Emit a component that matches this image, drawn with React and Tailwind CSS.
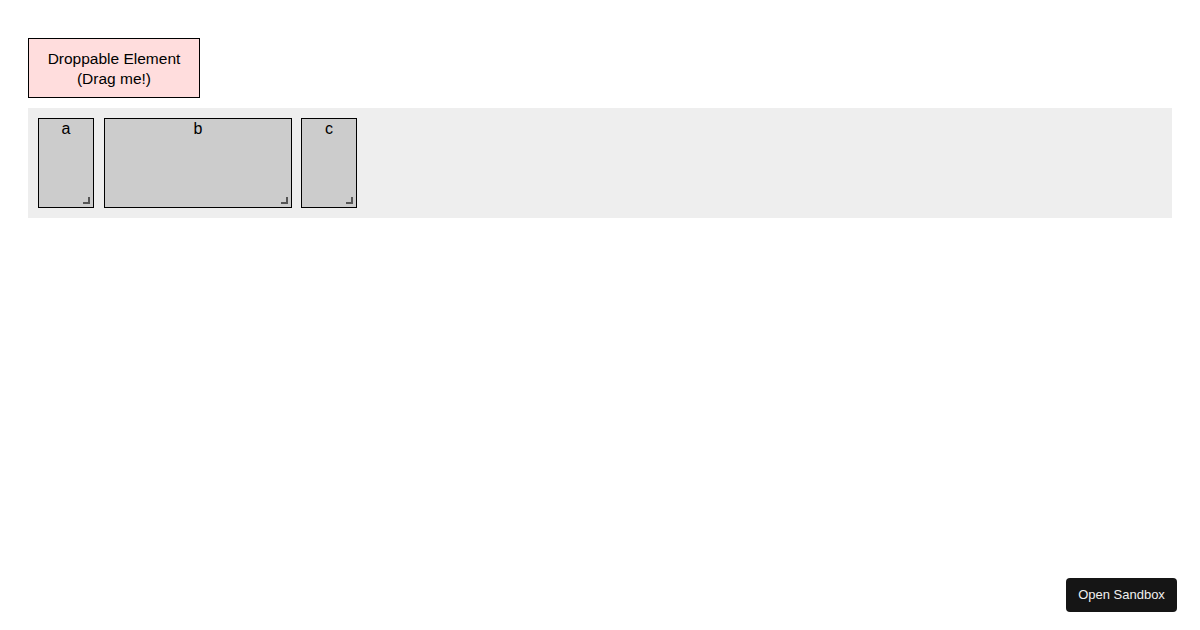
import React from 'react';

const Item = ({ label, width, ml }) => (
  <div
    className={`relative h-[90px] border border-black bg-[#cccccc] text-center text-base leading-5 text-black ${width} ${ml}`}
  >
    {label}
    <span className="absolute right-[3px] bottom-[3px] h-[7px] w-[7px] border-r-2 border-b-2 border-[#555555]" />
  </div>
);

export default function App() {
  return (
    <div className="min-h-[630px] bg-white px-[28px] pt-[38px] font-['Liberation_Sans',Arial,sans-serif] text-black">
      <div className="w-[172px] border border-black bg-[#ffdddd] pt-[10px] pb-[8px] text-center text-[15.5px] leading-5">
        Droppable Element
        <br />
        (Drag me!)
      </div>
      <div className="mt-[10px] flex h-[110px] items-start bg-[#eeeeee] p-[10px]">
        <Item label="a" width="w-[56px]" ml="" />
        <Item label="b" width="w-[188px]" ml="ml-[10px]" />
        <Item label="c" width="w-[56px]" ml="ml-[9px]" />
      </div>
      <button className="fixed right-[23px] bottom-[18px] h-[34px] w-[111px] rounded-[4px] bg-[#151515] text-[13px] text-[#f0f0f0]">
        Open Sandbox
      </button>
    </div>
  );
}
